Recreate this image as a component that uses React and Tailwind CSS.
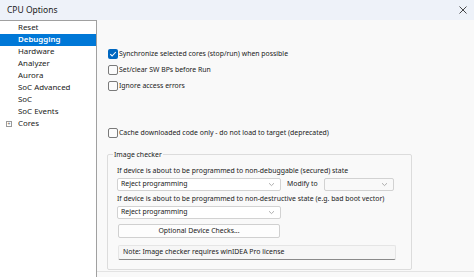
const treeItems = [
  "Reset",
  "Debugging",
  "Hardware",
  "Analyzer",
  "Aurora",
  "SoC Advanced",
  "SoC",
  "SoC Events",
  "Cores",
];

function Check({ checked, label, className = "" }) {
  return (
    <div className={`flex items-center h-[12px] ${className}`}>
      {checked ? (
        <span className="w-[10px] h-[10px] rounded-[2px] bg-[#0067c0] flex items-center justify-center">
          <svg width="8" height="8" viewBox="0 0 8 8">
            <path d="M1.3 4.2 L3.1 6 L6.8 2" fill="none" stroke="white" strokeWidth="1.1" />
          </svg>
        </span>
      ) : (
        <span className="w-[10px] h-[10px] rounded-[2px] border border-[#7a7a7a] bg-[#fbfbfb]" />
      )}
      <span className="ml-[1px] text-[6.9px] text-[#1a1a1a]">{label}</span>
    </div>
  );
}

function Chevron() {
  return (
    <svg width="7" height="5" viewBox="0 0 7 5">
      <path d="M1 1.2 L3.5 3.6 L6 1.2" fill="none" stroke="#9a9a9a" strokeWidth="0.8" />
    </svg>
  );
}

function Select({ value, className = "", disabled }) {
  return (
    <div
      className={`h-[13px] border border-[#d2d2d2] rounded-[2px] flex items-center justify-between pl-[3px] pr-[5px] ${
        disabled ? "bg-[#f9f9f9]" : "bg-white"
      } ${className}`}
    >
      <span className="text-[6.9px] text-[#1a1a1a]">{value}</span>
      <Chevron />
    </div>
  );
}

export default function App() {
  return (
    <div
      className="w-[474px] h-[277px] flex flex-col bg-[#f9f9f9] overflow-hidden"
      style={{ fontFamily: '"Noto Sans", "Open Sans", sans-serif' }}
    >
      <div className="h-[20px] bg-[#eef2f9] flex items-center justify-between pl-[7px] pr-[7px]">
        <span className="text-[8.5px] text-[#1a1a1a]">CPU Options</span>
        <svg width="8" height="8" viewBox="0 0 8 8">
          <path d="M0.5 0.5 L7.5 7.5 M7.5 0.5 L0.5 7.5" stroke="#333" strokeWidth="0.9" />
        </svg>
      </div>

      <div className="flex flex-1 min-h-0">
        <div className="w-[97px] bg-white border-t border-r border-[#a0a0a0] pt-[1px]">
          {treeItems.map((item) => {
            const selected = item === "Debugging";
            return (
              <div
                key={item}
                className={`h-[12px] flex items-center ${
                  selected ? "bg-[#0078d7] text-white font-semibold" : "text-[#1a1a1a]"
                }`}
              >
                <span className="w-[18px] flex justify-center">
                  {item === "Cores" && (
                    <span className="w-[6px] h-[6px] border border-[#9a9a9a] flex items-center justify-center text-[5px] leading-none text-[#555]">
                      +
                    </span>
                  )}
                </span>
                <span className="text-[7.9px]">{item}</span>
              </div>
            );
          })}
        </div>

        <div className="flex-1 flex flex-col pl-[10px] pr-[62px] border-b border-[#e3e3e3] mb-[5px]">
          <Check checked label="Synchronize selected cores (stop/run) when possible" className="mt-[28px] ml-[1px]" />
          <Check label="Set/clear SW BPs before Run" className="mt-[4px] ml-[1px]" />
          <Check label="Ignore access errors" className="mt-[4px] ml-[1px]" />
          <Check
            label="Cache downloaded code only - do not load to target (deprecated)"
            className="mt-[35px] ml-[1px]"
          />

          <div className="relative mt-[15px] border border-[#dcdcdc] rounded-[2px] pl-[9px] pr-[14px] pt-[11px] pb-[9px]">
            <span className="absolute left-[5px] top-[-6px] px-[1px] bg-[#f9f9f9] text-[6.9px] text-[#1a1a1a] leading-[11px]">
              Image checker
            </span>
            <div className="text-[6.9px] text-[#1a1a1a] h-[11px] flex items-center">
              If device is about to be programmed to non-debuggable (secured) state
            </div>
            <div className="flex items-center mt-[1px]">
              <Select value="Reject programming" className="w-[164px]" />
              <span className="ml-[6px] text-[6.9px] text-[#1a1a1a]">Modify to</span>
              <Select value="" disabled className="ml-[6px] w-[70px]" />
            </div>
            <div className="text-[6.9px] text-[#1a1a1a] h-[11px] flex items-center mt-[3px]">
              If device is about to be programmed to non-destructive state (e.g. bad boot vector)
            </div>
            <Select value="Reject programming" className="w-[164px] mt-[1px]" />
            <div className="w-[162px] h-[14px] mt-[5px] ml-[1px] border border-[#d0d0d0] rounded-[2px] bg-[#fdfdfd] flex items-center justify-center text-[6.9px] text-[#1a1a1a]">
              Optional Device Checks...
            </div>
            <div className="w-[278px] h-[15px] mt-[7px] ml-[1px] border border-[#e5e5e5] border-b-[#8a8a8a] rounded-[2px] bg-[#f6f6f6] flex items-center pl-[4px] text-[6.9px] text-[#1a1a1a]">
              Note: Image checker requires winIDEA Pro license
            </div>
          </div>
        </div>
      </div>
    </div>
  );
}
